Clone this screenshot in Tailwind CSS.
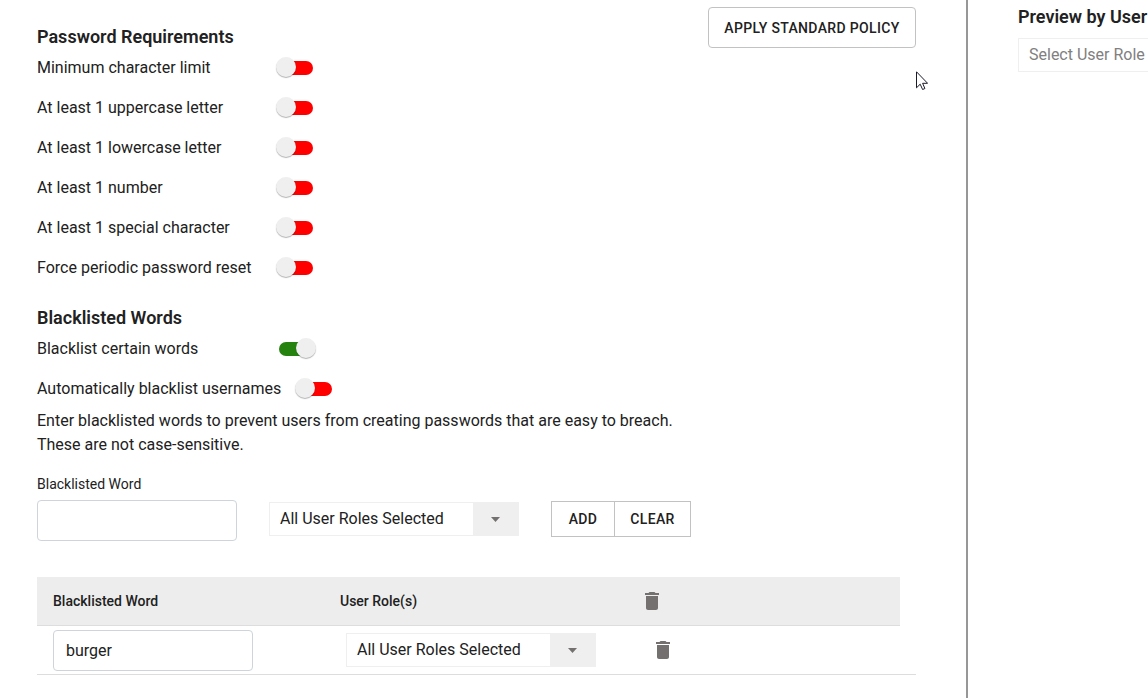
<!DOCTYPE html>
<html lang="en">
  <head>
    <meta charset="UTF-8" />
    <meta name="viewport" content="width=device-width, initial-scale=1.0" />
    <title>Password Policy</title>
    <script src="https://cdn.jsdelivr.net/npm/@tailwindcss/browser@4"></script>
  </head>
  <body class="bg-white font-['Roboto',sans-serif] text-base text-[#212121]">
    <div class="flex min-h-screen">
      <main class="flex-1 min-w-0 border-r-2 border-[#979797] pl-[37px] pr-[50px] pt-[7px]">
        <!-- Password requirements -->
        <div class="flex justify-between items-start">
          <section class="pt-[18px]">
            <h2 class="text-lg leading-[23px] font-semibold">Password Requirements</h2>
            <div class="flex items-center h-10">
              <label for="min-chars" class="w-[244px]">Minimum character limit</label>
              <input type="checkbox" id="min-chars" class="relative appearance-none w-8 h-3.5 rounded-full bg-[#ff0000] checked:bg-[#26820f] before:absolute before:size-5 before:rounded-full before:bg-[#efefef] before:shadow-[0_1px_1px_rgba(0,0,0,0.3)] before:-top-1 before:-left-[5px] checked:before:left-[17px]" />
            </div>
            <div class="flex items-center h-10">
              <label for="uppercase" class="w-[244px]">At least 1 uppercase letter</label>
              <input type="checkbox" id="uppercase" class="relative appearance-none w-8 h-3.5 rounded-full bg-[#ff0000] checked:bg-[#26820f] before:absolute before:size-5 before:rounded-full before:bg-[#efefef] before:shadow-[0_1px_1px_rgba(0,0,0,0.3)] before:-top-1 before:-left-[5px] checked:before:left-[17px]" />
            </div>
            <div class="flex items-center h-10">
              <label for="lowercase" class="w-[244px]">At least 1 lowercase letter</label>
              <input type="checkbox" id="lowercase" class="relative appearance-none w-8 h-3.5 rounded-full bg-[#ff0000] checked:bg-[#26820f] before:absolute before:size-5 before:rounded-full before:bg-[#efefef] before:shadow-[0_1px_1px_rgba(0,0,0,0.3)] before:-top-1 before:-left-[5px] checked:before:left-[17px]" />
            </div>
            <div class="flex items-center h-10">
              <label for="number" class="w-[244px]">At least 1 number</label>
              <input type="checkbox" id="number" class="relative appearance-none w-8 h-3.5 rounded-full bg-[#ff0000] checked:bg-[#26820f] before:absolute before:size-5 before:rounded-full before:bg-[#efefef] before:shadow-[0_1px_1px_rgba(0,0,0,0.3)] before:-top-1 before:-left-[5px] checked:before:left-[17px]" />
            </div>
            <div class="flex items-center h-10">
              <label for="special" class="w-[244px]">At least 1 special character</label>
              <input type="checkbox" id="special" class="relative appearance-none w-8 h-3.5 rounded-full bg-[#ff0000] checked:bg-[#26820f] before:absolute before:size-5 before:rounded-full before:bg-[#efefef] before:shadow-[0_1px_1px_rgba(0,0,0,0.3)] before:-top-1 before:-left-[5px] checked:before:left-[17px]" />
            </div>
            <div class="flex items-center h-10">
              <label for="reset" class="w-[244px]">Force periodic password reset</label>
              <input type="checkbox" id="reset" class="relative appearance-none w-8 h-3.5 rounded-full bg-[#ff0000] checked:bg-[#26820f] before:absolute before:size-5 before:rounded-full before:bg-[#efefef] before:shadow-[0_1px_1px_rgba(0,0,0,0.3)] before:-top-1 before:-left-[5px] checked:before:left-[17px]" />
            </div>
          </section>
          <button type="button" class="w-52 h-[41px] whitespace-nowrap border border-[#c2c2c2] rounded text-sm font-medium tracking-wide uppercase">Apply Standard Policy</button>
        </div>

        <!-- Blacklisted words -->
        <section class="mt-[18px]">
          <h2 class="text-lg leading-[23px] font-semibold">Blacklisted Words</h2>
          <div class="flex items-center h-10">
            <label for="blacklist" class="w-[242px]">Blacklist certain words</label>
            <input type="checkbox" id="blacklist" checked class="relative appearance-none w-8 h-3.5 rounded-full bg-[#ff0000] checked:bg-[#26820f] before:absolute before:size-5 before:rounded-full before:bg-[#efefef] before:shadow-[0_1px_1px_rgba(0,0,0,0.3)] before:-top-1 before:-left-[5px] checked:before:left-[17px]" />
          </div>
          <div class="flex items-center h-10">
            <label for="auto-usernames" class="w-[263px]">Automatically blacklist usernames</label>
            <input type="checkbox" id="auto-usernames" class="relative appearance-none w-8 h-3.5 rounded-full bg-[#ff0000] checked:bg-[#26820f] before:absolute before:size-5 before:rounded-full before:bg-[#efefef] before:shadow-[0_1px_1px_rgba(0,0,0,0.3)] before:-top-1 before:-left-[5px] checked:before:left-[17px]" />
          </div>
          <p>
            Enter blacklisted words to prevent users from creating passwords that are easy to breach.<br />
            These are not case-sensitive.
          </p>

          <label for="word" class="block mt-[17px] mb-1.5 text-sm">Blacklisted Word</label>
          <div class="flex items-start gap-8">
            <input type="text" id="word" class="w-[200px] h-[41px] px-3 border border-[#ced4da] rounded" />
            <div class="flex items-center gap-8 pt-px">
              <div class="relative w-[250px]">
                <select aria-label="User roles" class="appearance-none w-full h-[34px] pl-2.5 pr-12 border border-[#efefef] bg-white">
                  <option>All User Roles Selected</option>
                </select>
                <span class="absolute inset-y-0 right-0 w-[46px] pr-0.5 flex items-center justify-center bg-[#efefef] pointer-events-none">
                  <svg class="w-[9px] h-[5px]" viewBox="0 0 9 5" fill="#757070"><path d="M0 0h9L4.500 5z" /></svg>
                </span>
              </div>
              <div class="flex">
                <button type="button" class="w-16 h-9 border border-[#c2c2c2] text-sm font-medium tracking-wide uppercase">Add</button>
                <button type="button" class="w-[77px] h-9 -ml-px border border-[#c2c2c2] text-sm font-medium tracking-wide uppercase">Clear</button>
              </div>
            </div>
          </div>
        </section>

        <table class="mt-9 w-full table-fixed border-separate border-spacing-0 text-left">
          <thead>
            <tr class="h-[49px] text-sm">
              <th class="w-[287px] p-0 pl-4 font-medium bg-[#ededed] border-b border-[#dddddd]">Blacklisted Word</th>
              <th class="w-[300px] p-0 pl-4 font-medium bg-[#ededed] border-b border-[#dddddd]">User Role(s)</th>
              <th class="p-0 pl-4 bg-[#ededed] border-b border-[#dddddd]">
                <button type="button" aria-label="Delete all" class="block">
                  <svg class="size-6" viewBox="0 0 24 24" fill="#757070"><path d="M6 19c0 1.100.9 2 2 2h8c1.100 0 2-.9 2-2V7H6v12zM19 4h-3.500l-1-1h-5l-1 1H5v2h14V4z" /></svg>
                </button>
              </th>
              <td class="w-4 p-0"></td>
            </tr>
          </thead>
          <tbody>
            <tr class="h-[49px]">
              <td class="p-0 pl-4 border-b border-[#dddddd]">
                <input type="text" value="burger" aria-label="Blacklisted word" class="block w-[200px] h-[41px] px-3 border border-[#ced4da] rounded" />
              </td>
              <td class="p-0 pl-[22px] border-b border-[#dddddd]">
                <div class="relative w-[250px]">
                  <select aria-label="User roles for burger" class="block appearance-none w-full h-[34px] pl-2.5 pr-12 border border-[#efefef] bg-white">
                    <option>All User Roles Selected</option>
                  </select>
                  <span class="absolute inset-y-0 right-0 w-[46px] pr-0.5 flex items-center justify-center bg-[#efefef] pointer-events-none">
                    <svg class="w-[9px] h-[5px]" viewBox="0 0 9 5" fill="#757070"><path d="M0 0h9L4.500 5z" /></svg>
                  </span>
                </div>
              </td>
              <td class="p-0 pl-[27px] border-b border-[#dddddd]" colspan="2">
                <button type="button" aria-label="Delete burger" class="block">
                  <svg class="size-6" viewBox="0 0 24 24" fill="#757070"><path d="M6 19c0 1.100.9 2 2 2h8c1.100 0 2-.9 2-2V7H6v12zM19 4h-3.500l-1-1h-5l-1 1H5v2h14V4z" /></svg>
                </button>
              </td>
            </tr>
          </tbody>
        </table>
      </main>

      <!-- Preview -->
      <aside class="w-[180px] shrink-0 overflow-hidden pl-[50px] pt-[5px]">
        <label for="preview-role" class="block mb-2.5 text-lg leading-[23px] font-semibold whitespace-nowrap">Preview by User</label>
        <select id="preview-role" class="appearance-none w-[250px] h-[34px] pl-2.5 border border-[#efefef] bg-white text-[#808080]">
          <option>Select User Role</option>
        </select>
      </aside>
    </div>

    <!-- Mouse pointer -->
    <svg class="absolute left-[916px] top-[71px] w-3 h-[19px]" viewBox="0 0 12 19" fill="white" stroke="#1a1a2a"><path d="M.5.800v16l3.700-3.600 2.400 5.300 2.300-1-2.300-5.200h5z" /></svg>
  </body>
</html>
